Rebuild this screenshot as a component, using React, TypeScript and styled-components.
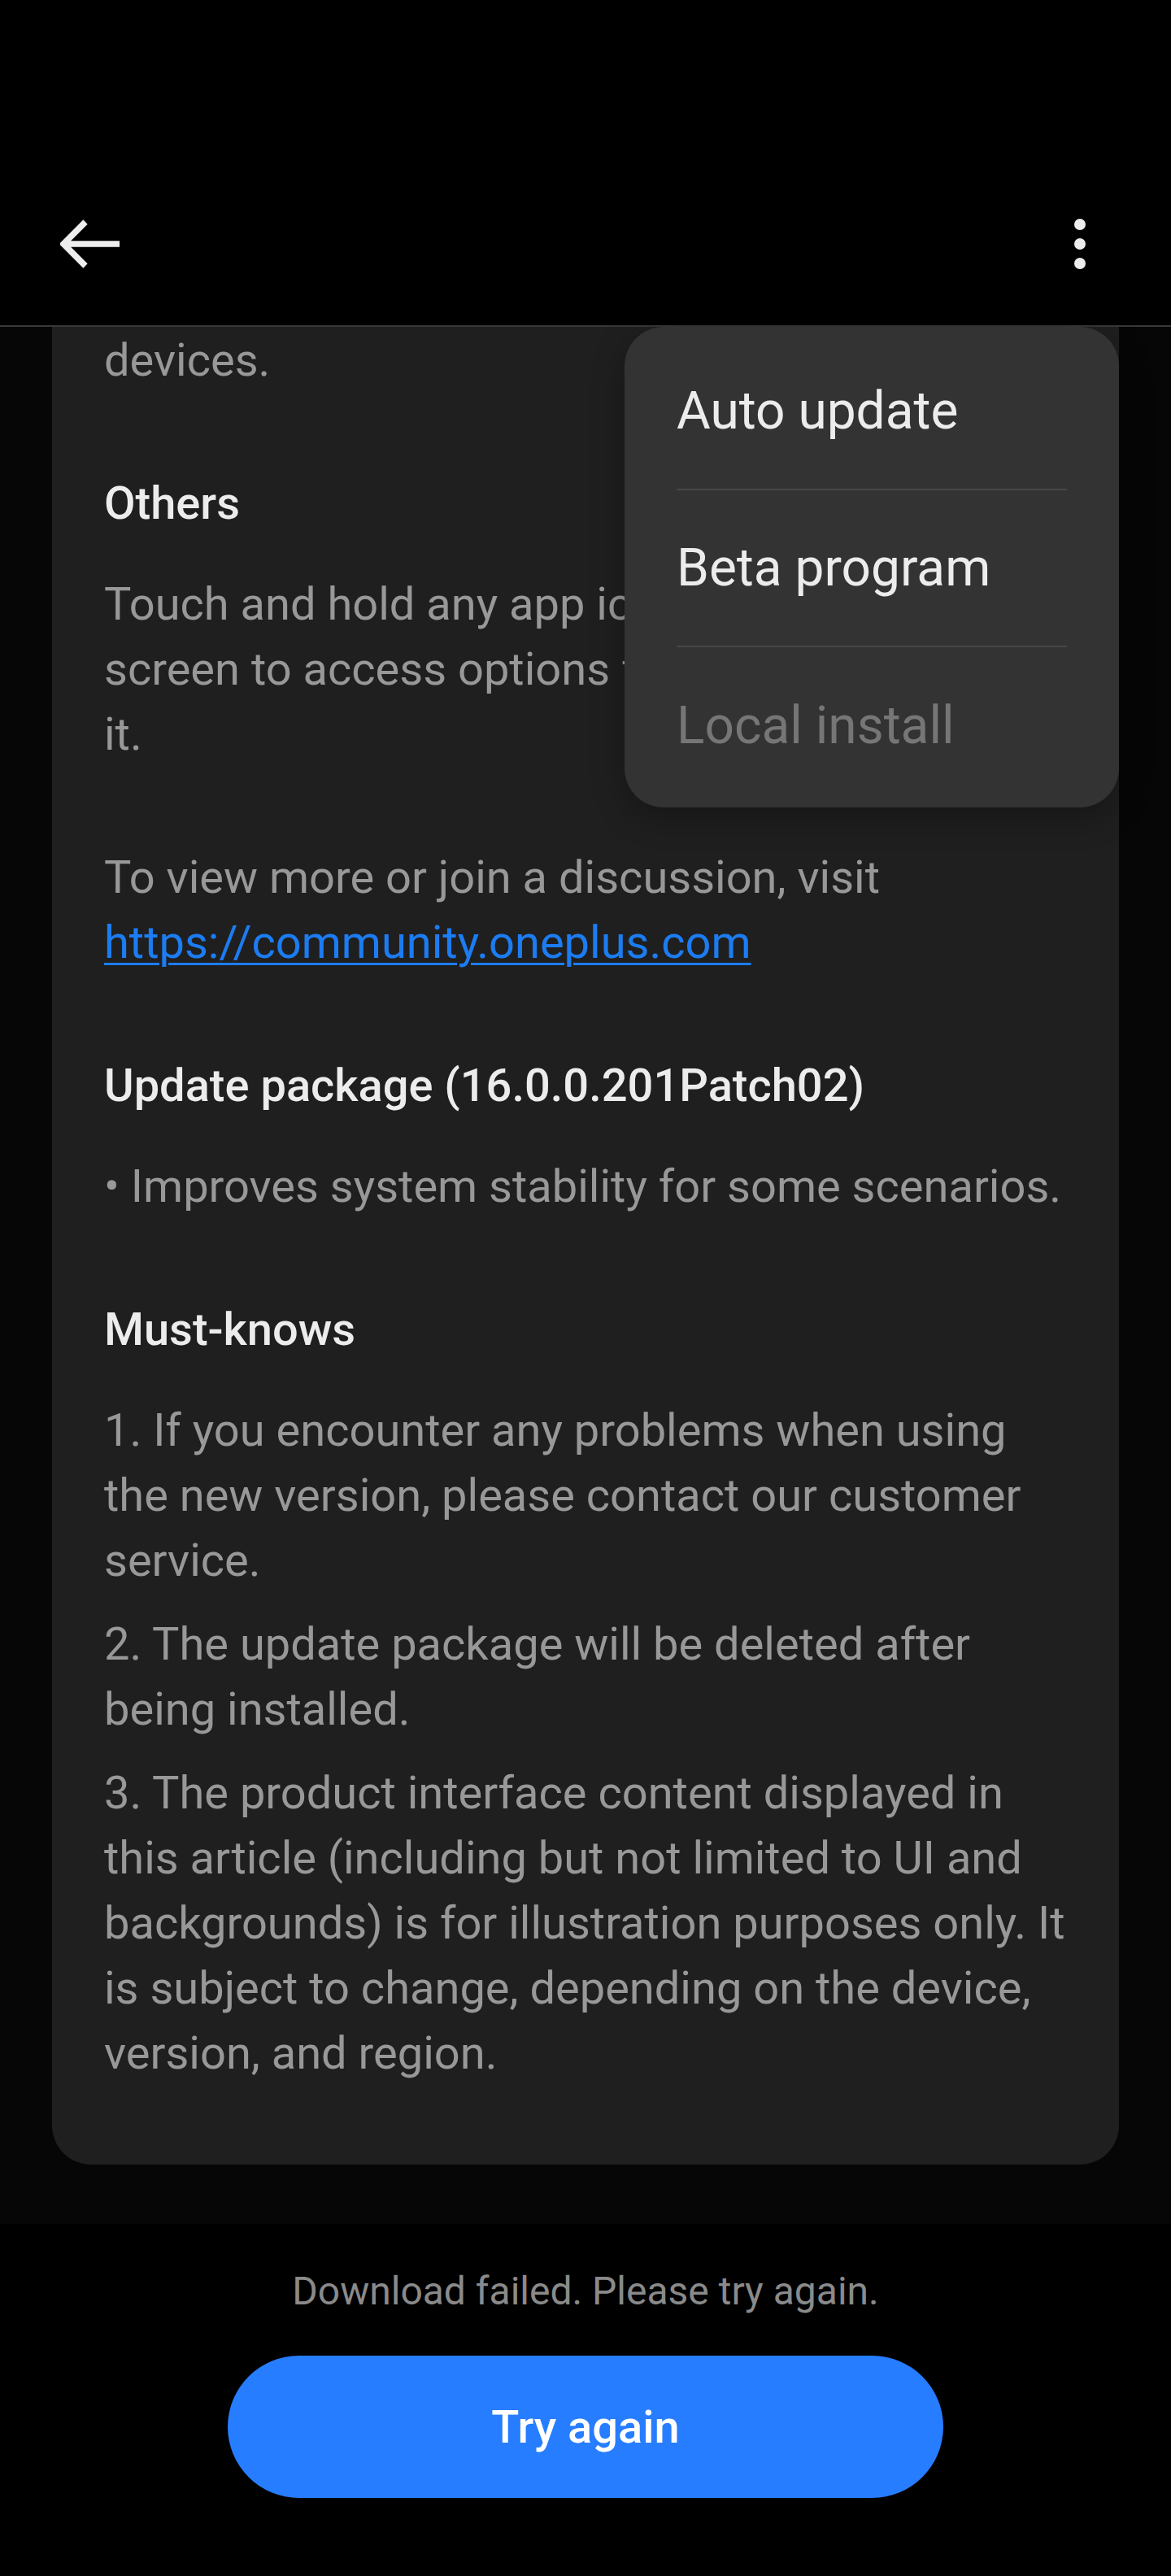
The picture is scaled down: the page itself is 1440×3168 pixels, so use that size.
import React from "react";
import styled, { createGlobalStyle } from "styled-components";

const GlobalStyle = createGlobalStyle`
  html, body {
    margin: 0;
    padding: 0;
    background: #000;
  }
  body {
    font-family: Roboto, "Noto Sans", "Liberation Sans", Arial, sans-serif;
    -webkit-font-smoothing: antialiased;
  }
`;

const Screen = styled.div`
  position: relative;
  width: 1440px;
  min-height: 3168px;
  display: flex;
  flex-direction: column;
  background: #000;
`;

const Header = styled.header`
  height: 400px;
  display: flex;
  flex-direction: column;
  justify-content: flex-end;
  background: #000;
  border-bottom: 2px solid #383838;
`;

const Toolbar = styled.div`
  height: 200px;
  display: flex;
  align-items: center;
  justify-content: space-between;
  padding: 0 105px 0 74px;
`;

const IconButton = styled.button`
  display: flex;
  align-items: center;
  justify-content: center;
  padding: 0;
  border: none;
  background: transparent;
  cursor: pointer;
`;

const Scroll = styled.main`
  background: #060606;
  padding: 0 64px 73px;
`;

const Card = styled.article`
  background: #1f1f1f;
  border-radius: 0 0 48px 48px;
  padding: 1px 64px 97px;
`;

const Section = styled.section`
  & + & {
    margin-top: 96px;
  }
`;

const Heading = styled.h3`
  margin: 0 0 44px;
  font-size: 56px;
  font-weight: 500;
  line-height: 80px;
  color: #ececec;
`;

const Para = styled.p`
  margin: 0;
  font-size: 56px;
  font-weight: 400;
  line-height: 80px;
  color: #989898;

  & + & {
    margin-top: 23px;
  }
`;

const Link = styled.a`
  color: #1c7cf2;
  text-decoration: underline;
  text-decoration-thickness: 3px;
  text-underline-offset: 6px;
`;

const Footer = styled.footer`
  display: flex;
  flex-direction: column;
  align-items: center;
  padding: 51px 0 96px;
  background: #000;
`;

const Notice = styled.div`
  font-size: 48px;
  line-height: 64px;
  color: #8a8a8a;
`;

const RetryButton = styled.button`
  margin-top: 47px;
  width: 880px;
  height: 175px;
  border: none;
  border-radius: 88px;
  background: #277dff;
  color: #fff;
  font-family: inherit;
  font-size: 56px;
  font-weight: 500;
  cursor: pointer;
`;

const Menu = styled.ul`
  position: absolute;
  top: 402px;
  right: 64px;
  width: 608px;
  margin: 0;
  padding: 8px 0 4px;
  list-style: none;
  background: #333333;
  border-radius: 48px;
  box-shadow: 0 12px 40px rgba(0, 0, 0, 0.3);
`;

const MenuItem = styled.li<{ $disabled?: boolean; $last?: boolean }>`
  height: 193px;
  margin: 0 64px;
  display: flex;
  align-items: center;
  box-sizing: border-box;
  font-size: 64px;
  color: ${(p) => (p.$disabled ? "#767676" : "#ececec")};
  border-bottom: ${(p) => (p.$last ? "none" : "2px solid #474747")};
`;

const BackArrow = () => (
  <svg width="76" height="60" viewBox="0 0 76 60" fill="none">
    <path
      d="M31 3 L4 30 L31 57 M4 30 H73"
      stroke="#ededed"
      strokeWidth="7.5"
      strokeLinejoin="miter"
    />
  </svg>
);

const MoreDots = () => (
  <svg width="14" height="62" viewBox="0 0 14 62" fill="#ededed">
    <circle cx="7" cy="7" r="7" />
    <circle cx="7" cy="31" r="7" />
    <circle cx="7" cy="55" r="7" />
  </svg>
);

const menuItems = [
  { label: "Auto update" },
  { label: "Beta program" },
  { label: "Local install", disabled: true },
];

export default function App() {
  return (
    <>
      <GlobalStyle />
      <Screen>
        <Header>
          <Toolbar>
            <IconButton aria-label="Back">
              <BackArrow />
            </IconButton>
            <IconButton aria-label="More">
              <MoreDots />
            </IconButton>
          </Toolbar>
        </Header>

        <Scroll>
          <Card>
            <Section>
              <Para>devices.</Para>
            </Section>

            <Section>
              <Heading>Others</Heading>
              <Para>
                Touch and hold any app icon on the Home
                <br />
                screen to access options for customizing
                <br />
                it.
              </Para>
            </Section>

            <Section>
              <Para>
                To view more or join a discussion, visit{" "}
                <Link href="#">https://community.oneplus.com</Link>
              </Para>
            </Section>

            <Section>
              <Heading>Update package (16.0.0.201Patch02)</Heading>
              <Para>• Improves system stability for some scenarios.</Para>
            </Section>

            <Section>
              <Heading>Must-knows</Heading>
              <Para>
                1. If you encounter any problems when using the new version,
                please contact our customer service.
              </Para>
              <Para>
                2. The update package will be deleted after being installed.
              </Para>
              <Para>
                3. The product interface content displayed in this article
                (including but not limited to UI and backgrounds) is for
                illustration purposes only. It is subject to change, depending
                on the device, version, and region.
              </Para>
            </Section>
          </Card>
        </Scroll>

        <Footer>
          <Notice>Download failed. Please try again.</Notice>
          <RetryButton>Try again</RetryButton>
        </Footer>

        <Menu>
          {menuItems.map((item, i) => (
            <MenuItem
              key={item.label}
              $disabled={item.disabled}
              $last={i === menuItems.length - 1}
            >
              {item.label}
            </MenuItem>
          ))}
        </Menu>
      </Screen>
    </>
  );
}
